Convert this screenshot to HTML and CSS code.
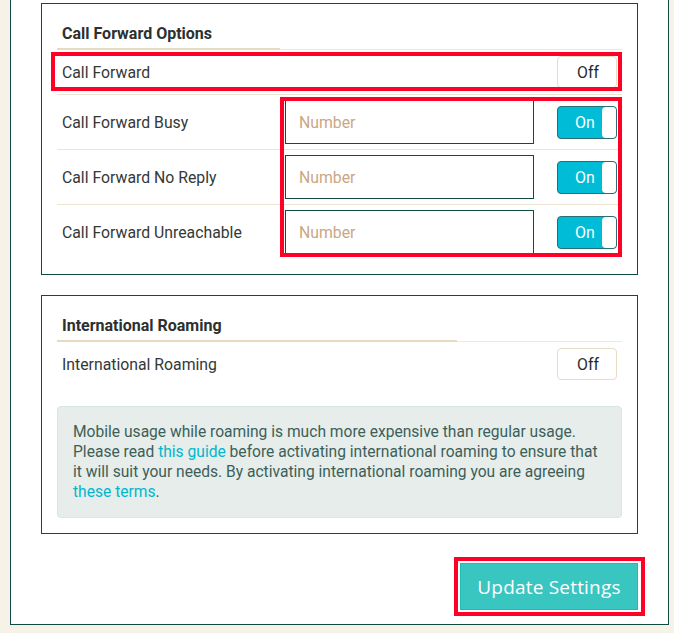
FILE: index.html
```html
<!DOCTYPE html>
<html lang="en">
<head>
<meta charset="utf-8">
<title>Settings</title>
<link rel="stylesheet" href="styles.css">
</head>
<body>
<div class="panel">
  <section class="card">
    <h3 class="card-title title-short">Call Forward Options</h3>
    <div class="row row-first">
      <span class="label">Call Forward</span>
      <button class="btn-off" type="button">Off</button>
    </div>
    <div class="row">
      <span class="label">Call Forward Busy</span>
      <input class="num" type="text" placeholder="Number">
      <span class="toggle"><span class="toggle-text">On</span><span class="knob"></span></span>
    </div>
    <div class="row">
      <span class="label">Call Forward No Reply</span>
      <input class="num" type="text" placeholder="Number">
      <span class="toggle"><span class="toggle-text">On</span><span class="knob"></span></span>
    </div>
    <div class="row row-last">
      <span class="label">Call Forward Unreachable</span>
      <input class="num" type="text" placeholder="Number">
      <span class="toggle"><span class="toggle-text">On</span><span class="knob"></span></span>
    </div>
  </section>

  <section class="card card-second">
    <h3 class="card-title title-long">International Roaming</h3>
    <div class="row row-plain">
      <span class="label">International Roaming</span>
      <button class="btn-off" type="button">Off</button>
    </div>
    <div class="info">
      Mobile usage while roaming is much more expensive than regular usage.<br>
      Please read <a href="#">this guide</a> before activating international roaming to ensure that<br>
      it will suit your needs. By activating international roaming you are agreeing<br>
      <a href="#">these terms</a>.
    </div>
  </section>

  <div class="actions">
    <button class="btn-update" type="button">Update Settings</button>
  </div>
</div>

<div class="mark mark-a"></div>
<div class="mark mark-b"></div>
<div class="mark mark-c"></div>
</body>
</html>
```

FILE: styles.css
```css
html, body {
  margin: 0;
  padding: 0;
}
body {
  background: #f6f2e7;
  font-family: Roboto, "Liberation Sans", sans-serif;
  color: #363a39;
  position: relative;
  height: 633px;
  overflow: hidden;
}
.panel {
  margin-left: 10px;
  width: 659px;
  background: #ffffff;
  border: 1px solid #0d4b43;
  border-top: 0;
  padding: 3px 30px 14px 30px;
  box-sizing: border-box;
}
.card {
  border: 1px solid #0d4b43;
  background: #fff;
  padding: 0 15px 15px 15px;
}
.card-second {
  margin-top: 20px;
}
.card-title {
  margin: 0;
  padding: 20px 5px 4px 5px;
  line-height: 20px;
  font-size: 16px;
  font-weight: 700;
  color: #2c302f;
  border-bottom: 2px solid transparent;
  background-repeat: no-repeat;
  background-position: left bottom, left bottom;
  background-origin: border-box;
  background-clip: border-box;
}
.title-short {
  background-image: linear-gradient(#e6dabf, #e6dabf), linear-gradient(#efe7d7, #efe7d7);
  background-size: 223px 2px, 100% 1px;
}
.title-long {
  background-image: linear-gradient(#e6dabf, #e6dabf), linear-gradient(#efe7d7, #efe7d7);
  background-size: 400px 2px, 100% 1px;
}
.row {
  display: grid;
  grid-template-columns: 200px 249px 60px;
  column-gap: 23px;
  align-items: center;
  padding: 5px 5px;
  border-bottom: 1px solid #ede4d2;
}
.row-first {
  padding: 6px 5px;
}
.row-last {
  border-bottom: 0;
}
.row-plain {
  padding: 6px 5px;
  border-bottom: 0;
}
.label {
  font-size: 15.8px;
  line-height: 20px;
  padding-top: 2px;
  color: #343837;
  white-space: nowrap;
}
.btn-off {
  grid-column: 3;
  width: 60px;
  height: 32px;
  background: #fff;
  border: 1px solid #e7ddc7;
  border-radius: 4px;
  font-family: Roboto, "Liberation Sans", sans-serif;
  font-size: 15.8px;
  color: #1f2b2a;
  padding: 0 0 0 2px;
  text-align: center;
}
.num {
  width: 249px;
  height: 44px;
  box-sizing: border-box;
  border: 1px solid #0d4b43;
  border-radius: 0;
  padding: 0 13px;
  font-family: Roboto, "Liberation Sans", sans-serif;
  font-size: 15.8px;
  color: #333;
  background: #fff;
  outline: none;
}
.num::placeholder {
  color: #c9a785;
}
.toggle {
  display: flex;
  width: 60px;
  height: 33px;
  box-sizing: border-box;
  border: 1px solid #2b6c75;
  border-radius: 4px;
  background: #00bcd6;
  overflow: hidden;
}
.toggle-text {
  flex: 1;
  display: flex;
  align-items: center;
  justify-content: center;
  color: #ffffff;
  font-size: 16px;
  padding-left: 10px;
}
.knob {
  width: 14px;
  background: #ffffff;
  border-radius: 4px 3px 3px 4px;
}
.info {
  margin-top: 20px;
  background: #e6edea;
  border: 1px solid #d5e7df;
  border-radius: 4px;
  padding: 15px 15px;
  font-size: 15.6px;
  line-height: 20px;
  color: #3d5f59;
  white-space: nowrap;
}
.info a {
  color: #00b7cd;
  text-decoration: none;
}
.actions {
  display: flex;
  justify-content: flex-end;
  margin-top: 29px;
}
.btn-update {
  width: 178px;
  height: 47px;
  background: #39c6c1;
  border: 1px solid #20bbb3;
  color: #ffffff;
  font-family: "Open Sans", "Liberation Sans", sans-serif;
  font-size: 19px;
  padding: 0;
  letter-spacing: 0.2px;
}
.mark {
  position: absolute;
  border: 4px solid #ff0026;
  box-sizing: border-box;
  pointer-events: none;
}
.mark-a {
  left: 51px;
  top: 52px;
  width: 571px;
  height: 39px;
}
.mark-b {
  left: 280px;
  top: 97px;
  width: 342px;
  height: 160px;
}
.mark-c {
  left: 454px;
  top: 557px;
  width: 191px;
  height: 59px;
}
```
